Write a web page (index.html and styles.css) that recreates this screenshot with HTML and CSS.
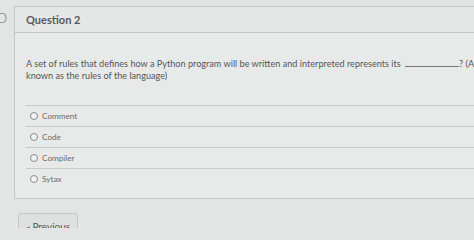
FILE: index.html
```html
<!DOCTYPE html>
<html>
<head>
<meta charset="utf-8">
<link rel="stylesheet" href="styles.css">
</head>
<body>
<div class="page">
  <div class="side">
    <svg class="flag" width="12" height="12" viewBox="0 0 12 12"><path d="M0 1.5 H6.5 Q10 1.5 10 6 Q10 10.5 6.5 10.5 H0" fill="none" stroke="#9a9a9a" stroke-width="1.2"/></svg>
  </div>
  <div class="main">
    <div class="card">
      <div class="card-head">Question 2</div>
      <div class="card-body">
        <p class="qtext">A set of rules that defines how a Python program will be written and interpreted represents its <span class="blank"></span>? (A known as the rules of the language)</p>
        <ul class="answers">
          <li class="answer"><span class="radio"></span>Comment</li>
          <li class="answer"><span class="radio"></span>Code</li>
          <li class="answer"><span class="radio"></span>Compiler</li>
          <li class="answer"><span class="radio"></span>Sytax</li>
        </ul>
      </div>
    </div>
    <div class="nav">
      <button class="btn"><span class="arrow">&#9666;</span> Previous</button>
    </div>
  </div>
</div>
</body>
</html>
```
FILE: styles.css
```css
html, body {
  margin: 0;
  padding: 0;
  width: 474px;
  height: 228px;
  overflow: hidden;
  background: #e3e5e5;
  font-family: Lato, "Open Sans", sans-serif;
  color: #5a5a5a;
}
.page {
  display: flex;
  padding-top: 6px;
}
.side {
  width: 14px;
  flex-shrink: 0;
  padding-top: 6px;
}
.flag {
  display: block;
  margin-left: -4px;
}
.main {
  flex-shrink: 0;
  width: 520px;
}
.card {
  border: 1px solid #c4c6c6;
  background: #e8eaea;
}
.card-head {
  height: 25px;
  display: flex;
  align-items: center;
  padding-left: 11px;
  font-size: 11px;
  font-weight: 700;
  color: #595959;
  border-bottom: 1px solid #c4c6c6;
  background: #e6e7e7;
}
.card-body {
  padding: 25px 0 9px 11px;
}
.qtext {
  margin: 0;
  width: 462px;
  font-size: 9.15px;
  line-height: 12px;
  color: #565656;
}
.blank {
  display: inline-block;
  width: 54px;
  border-bottom: 1px solid #777;
  margin-left: 2px;
  vertical-align: baseline;
}
.answers {
  list-style: none;
  margin: 23px 0 0 0;
  padding: 0;
}
.answer {
  height: 20px;
  border-top: 1px solid #c8caca;
  display: flex;
  align-items: center;
  padding-left: 4px;
  font-size: 8.2px;
  color: #6a6a6a;
}
.radio {
  width: 6px;
  height: 6px;
  border: 1px solid #8a8a8a;
  border-radius: 50%;
  margin-right: 4px;
  background: #f2f2f2;
}
.nav {
  padding: 14px 0 0 4px;
}
.btn {
  display: block;
  width: 60px;
  height: 24px;
  border: 1px solid #c4c6c6;
  border-radius: 3px;
  background: #dfe1e1;
  font-family: Lato, sans-serif;
  font-size: 10px;
  line-height: 12px;
  color: #555;
  padding: 2px 0 0 0;
  text-align: center;
  box-sizing: border-box;
}
.arrow {
  font-size: 7px;
}
```
